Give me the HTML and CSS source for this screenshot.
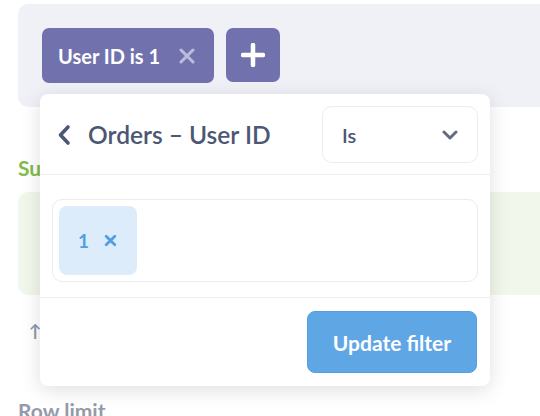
FILE: index.html
```html
<!DOCTYPE html>
<html>
<head>
<meta charset="utf-8">
<link rel="stylesheet" href="styles.css">
</head>
<body>
<div class="page">
  <div class="filter-bar">
    <div class="pill">
      <span class="pill-label">User ID is 1</span>
      <svg class="pill-x" width="16" height="16" viewBox="0 0 16 16"><path d="M2 2 L14 14 M14 2 L2 14" stroke="currentColor" stroke-width="3" stroke-linecap="round"/></svg>
    </div>
    <div class="add-btn">
      <svg width="24" height="24" viewBox="0 0 24 24"><path d="M12 2 V22 M2 12 H22" stroke="#fff" stroke-width="4.5" stroke-linecap="round"/></svg>
    </div>
  </div>
  <div class="section-title">Summarize</div>
  <div class="summary-box"></div>
  <div class="sort-row">↑</div>
  <div class="row-limit">Row limit</div>
</div>

<div class="popover">
  <div class="pop-header">
    <div class="pop-title">
      <svg class="back" width="14" height="22" viewBox="0 0 14 22"><path d="M11 3 L3.5 11 L11 19" fill="none" stroke="currentColor" stroke-width="3.6" stroke-linecap="round" stroke-linejoin="round"/></svg>
      <span>Orders – User ID</span>
    </div>
    <div class="select">
      <span>Is</span>
      <svg width="16" height="10" viewBox="0 0 16 10"><path d="M2 2 L8 8 L14 2" fill="none" stroke="currentColor" stroke-width="3" stroke-linecap="round" stroke-linejoin="round"/></svg>
    </div>
  </div>
  <div class="pop-body">
    <div class="value-input">
      <div class="token">
        <span>1</span>
        <svg width="13" height="13" viewBox="0 0 12 12"><path d="M2 2 L10 10 M10 2 L2 10" stroke="currentColor" stroke-width="2.6" stroke-linecap="round"/></svg>
      </div>
    </div>
  </div>
  <div class="pop-footer">
    <button class="update-btn">Update filter</button>
  </div>
</div>
</body>
</html>
```
FILE: styles.css
```css
html, body {
  margin: 0;
  padding: 0;
  background: #fff;
  font-family: Lato, "Noto Sans", sans-serif;
  overflow: hidden;
}
.page {
  padding: 4px 0 0 18px;
  height: 412px;
  overflow: hidden;
}
.filter-bar {
  background: #f0f0f7;
  border-radius: 10px 0 0 10px;
  height: 103px;
  box-sizing: border-box;
  padding: 24px 24px;
  display: flex;
  gap: 12px;
  align-items: flex-start;
}
.pill {
  background: #7172ad;
  border-radius: 7px;
  height: 55px;
  width: 172px;
  box-sizing: border-box;
  padding: 0 19px 0 16px;
  display: flex;
  align-items: center;
  justify-content: space-between;
  color: #fff;
}
.pill-label {
  font-size: 20px;
  font-weight: 700;
}
.pill-x {
  color: #bdbddb;
}
.add-btn {
  background: #7172ad;
  border-radius: 7px;
  width: 54px;
  height: 54px;
  display: flex;
  align-items: center;
  justify-content: center;
}
.section-title {
  margin-top: 48px;
  color: #84bb4c;
  font-size: 21px;
  font-weight: 700;
  line-height: 26px;
}
.summary-box {
  margin-top: 11px;
  height: 103px;
  background: #f2f7ec;
  border-radius: 10px 0 0 10px;
}
.sort-row {
  margin: 26px 0 0 11px;
  color: #8a97a8;
  font-size: 17px;
  font-weight: 700;
  line-height: 20px;
}
.row-limit {
  margin-top: 57px;
  color: #949aab;
  font-size: 21px;
  font-weight: 700;
  line-height: 26px;
  white-space: nowrap;
}
.popover {
  position: absolute;
  left: 40px;
  top: 94px;
  width: 450px;
  height: 292px;
  background: #fff;
  border-radius: 8px;
  box-shadow: 0 4px 20px rgba(0, 0, 0, 0.13);
  display: flex;
  flex-direction: column;
}
.pop-header {
  height: 81px;
  box-sizing: border-box;
  border-bottom: 1px solid #eeeef0;
  padding: 12px 12px 0 17px;
  display: flex;
  justify-content: space-between;
  align-items: flex-start;
}
.pop-title {
  display: flex;
  align-items: center;
  gap: 17px;
  height: 57px;
  color: #4c5773;
  font-size: 24.5px;
  font-weight: 600;
}
.back {
  color: #4c5773;
}
.select {
  width: 156px;
  height: 57px;
  box-sizing: border-box;
  border: 1px solid #ececef;
  border-radius: 10px;
  padding: 0 19px 0 19px;
  display: flex;
  align-items: center;
  justify-content: space-between;
  color: #4c5773;
  font-size: 20px;
  font-weight: 600;
}
.select svg {
  color: #636b7f;
}
.pop-body {
  height: 123px;
  box-sizing: border-box;
  border-bottom: 1px solid #eeeef0;
  padding: 24px 12px 0 12px;
}
.value-input {
  height: 83px;
  box-sizing: border-box;
  border: 1px solid #ececef;
  border-radius: 10px;
  padding: 6px;
}
.token {
  width: 78px;
  height: 69px;
  box-sizing: border-box;
  background: #ddecfa;
  border-radius: 8px;
  display: flex;
  align-items: center;
  padding-left: 19px;
  gap: 15px;
  color: #509ee3;
  font-size: 19px;
  font-weight: 700;
}
.pop-footer {
  flex: 1;
  display: flex;
  justify-content: flex-end;
  align-items: flex-start;
  padding: 13px 13px 0 0;
}
.update-btn {
  width: 170px;
  height: 62px;
  background: #5fa6e5;
  border: 1px solid #509ee3;
  border-radius: 8px;
  color: #fff;
  font-family: Lato, "Noto Sans", sans-serif;
  font-size: 21px;
  font-weight: 700;
  cursor: pointer;
}
```
